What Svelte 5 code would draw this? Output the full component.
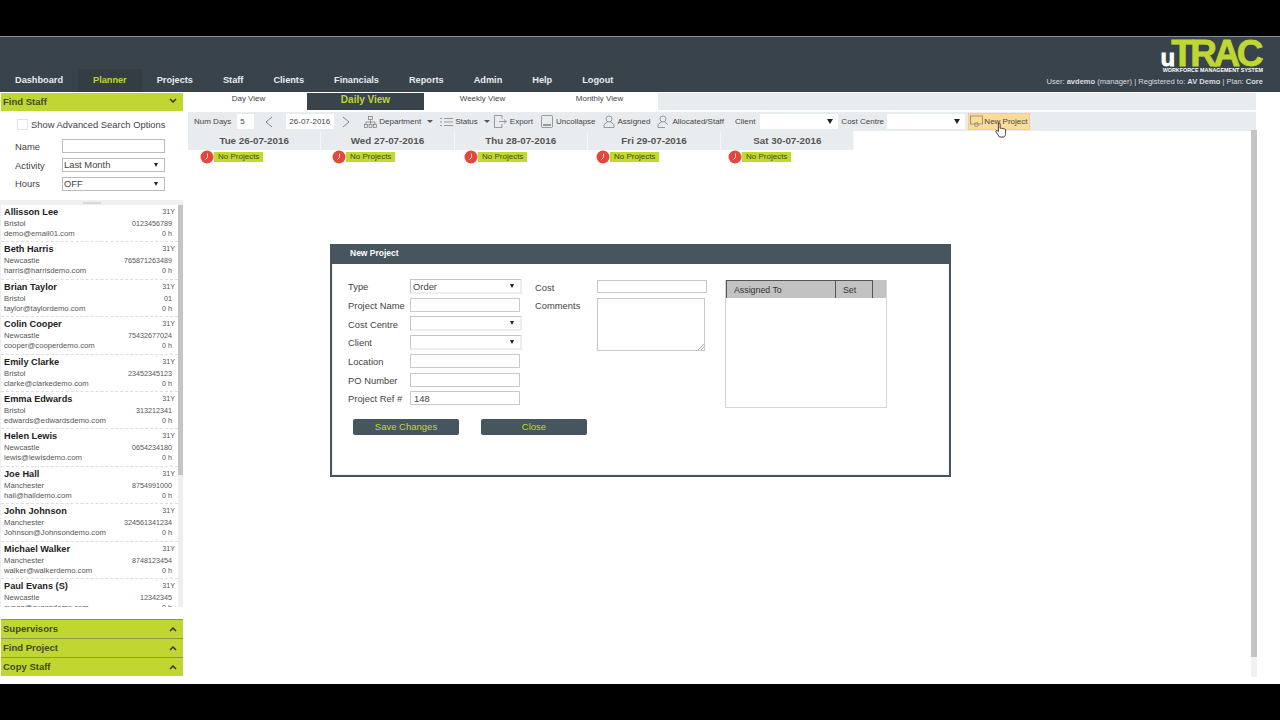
<script lang="ts">
  // Planner page with the New Project dialog open
  const navItems = ['Dashboard', 'Planner', 'Projects', 'Staff', 'Clients', 'Financials', 'Reports', 'Admin', 'Help', 'Logout']
  const tabs = ['Day View', 'Daily View', 'Weekly View', 'Monthly View']
  const days = ['Tue 26-07-2016', 'Wed 27-07-2016', 'Thu 28-07-2016', 'Fri 29-07-2016', 'Sat 30-07-2016']

  const staff = [
    { name: 'Allisson Lee', city: 'Bristol', email: 'demo@email01.com', phone: '0123456789' },
    { name: 'Beth Harris', city: 'Newcastle', email: 'harris@harrisdemo.com', phone: '765871263489' },
    { name: 'Brian Taylor', city: 'Bristol', email: 'taylor@taylordemo.com', phone: '01' },
    { name: 'Colin Cooper', city: 'Newcastle', email: 'cooper@cooperdemo.com', phone: '75432677024' },
    { name: 'Emily Clarke', city: 'Bristol', email: 'clarke@clarkedemo.com', phone: '23452345123' },
    { name: 'Emma Edwards', city: 'Bristol', email: 'edwards@edwardsdemo.com', phone: '313212341' },
    { name: 'Helen Lewis', city: 'Newcastle', email: 'lewis@lewisdemo.com', phone: '0654234180' },
    { name: 'Joe Hall', city: 'Manchester', email: 'hall@halldemo.com', phone: '8754991000' },
    { name: 'John Johnson', city: 'Manchester', email: 'Johnson@Johnsondemo.com', phone: '324561341234' },
    { name: 'Michael Walker', city: 'Manchester', email: 'walker@walkerdemo.com', phone: '8748123454' },
    { name: 'Paul Evans (S)', city: 'Newcastle', email: 'evans@evansdemo.com', phone: '12342345' }
  ]
</script>

<div class="page">
  <div class="letterbox top"></div>

  <header class="header">
    <nav class="nav">
      {#each navItems as item}
        <span class="nav-item" class:active={item === 'Planner'}>{item}</span>
      {/each}
    </nav>
    <div class="brand">
      <div class="logo"><span class="logo-u">u</span><span class="logo-trac">TRAC</span></div>
      <div class="logo-sub">WORKFORCE MANAGEMENT SYSTEM</div>
      <div class="user">User: <b>avdemo</b> (manager) | Registered to: <b>AV Demo</b> | Plan: <b>Core</b></div>
    </div>
  </header>

  <div class="body">
    <aside class="sidebar">
      <div class="bar first-bar">Find Staff
        <svg class="chev" width="8" height="6" viewBox="0 0 8 6"><polyline points="1,1 4,4 7,1" /></svg>
      </div>
      <div class="search">
        <label class="advanced"><span class="check"></span>Show Advanced Search Options</label>
        <div class="search-row"><span>Name</span><input class="field" /></div>
        <div class="search-row"><span>Activity</span><span class="select field">Last Month</span></div>
        <div class="search-row"><span>Hours</span><span class="select field">OFF</span></div>
      </div>
      <div class="splitter"><span></span></div>
      <div class="staff-wrap">
        <div class="staff-list">
          {#each staff as s}
            <div class="staff">
              <div class="staff-line"><b>{s.name}</b><span class="num-col">31Y</span></div>
              <div class="staff-line"><span>{s.city}</span><span class="num-col phone">{s.phone}</span></div>
              <div class="staff-line"><span>{s.email}</span><span class="num-col phone">0 h</span></div>
            </div>
          {/each}
        </div>
        <div class="staff-scroll"><div class="staff-thumb"></div></div>
      </div>
      <div class="accordion">
        {#each ['Supervisors', 'Find Project', 'Copy Staff'] as label}
          <div class="bar closed">{label}
            <svg class="chev" width="8" height="6" viewBox="0 0 8 6"><polyline points="1,5 4,2 7,5" /></svg>
          </div>
        {/each}
      </div>
    </aside>

    <main class="main">
      <div class="tabs">
        {#each tabs as tab}
          <span class="tab" class:current={tab === 'Daily View'}>{tab}</span>
        {/each}
        <span class="tabs-rest"></span>
      </div>

      <div class="toolbar">
        <span>Num Days</span>
        <span class="box num">5</span>
        <svg class="arrow prev" width="8" height="12" viewBox="0 0 8 12"><polyline points="7,1 1,6 7,11" /></svg>
        <span class="box date">26-07-2016</span>
        <svg class="arrow next" width="8" height="12" viewBox="0 0 8 12"><polyline points="1,1 7,6 1,11" /></svg>

        <span class="tool dept">
          <svg width="13" height="12" viewBox="0 0 13 12" class="ico"><rect x="4.500" y="0.500" width="4" height="3" /><rect x="0.500" y="8.500" width="3" height="3" /><rect x="5" y="8.500" width="3" height="3" /><rect x="9.500" y="8.500" width="3" height="3" /><path d="M6.500 3.500v5M2 8.500V6h9v2.500" /></svg>
          Department<i class="caret"></i>
        </span>
        <span class="tool status">
          <svg width="13" height="10" viewBox="0 0 13 10" class="ico"><path d="M0 1.500h2M4 1.500h9M0 5h2M4 5h9M0 8.500h2M4 8.500h9" /></svg>
          Status<i class="caret"></i>
        </span>
        <span class="tool">
          <svg width="13" height="13" viewBox="0 0 13 13" class="ico"><path d="M8 4V.5H.5v12H8V9M5 6.500h7M10 4.500l2.500 2-2.500 2" /></svg>
          Export
        </span>
        <span class="tool tight">
          <svg width="12" height="13" viewBox="0 0 12 13" class="ico"><rect x="0.500" y="0.500" width="11" height="12" rx="1" /><rect x="2" y="9" width="8" height="2" class="solid" /></svg>
          Uncollapse
        </span>
        <span class="tool tight">
          <svg width="12" height="13" viewBox="0 0 12 13" class="ico"><circle cx="6" cy="4" r="3" /><path d="M4.500 7 1 9.500V12.500H11V9.500L7.500 7" /></svg>
          Assigned
        </span>
        <span class="tool">
          <svg width="12" height="13" viewBox="0 0 12 13" class="ico"><circle cx="6" cy="4" r="3" /><path d="M4.500 7 1 9.500V12.500H8M7.500 7 11 9.500" /></svg>
          Allocated/Staff
        </span>
        <span class="client-label">Client</span>
        <span class="select box wide"></span>
        <span class="cost-label">Cost Centre</span>
        <span class="select box wide"></span>
        <span class="new-project">
          <svg width="13" height="12" viewBox="0 0 13 12" class="ico"><rect x="0.500" y="1" width="12" height="8" /><circle cx="6.500" cy="9.500" r="2" /></svg>
          New Project
        </span>
      </div>

      <div class="day-heads">
        {#each days as day}
          <div class="day-head">{day}</div>
        {/each}
      </div>
      <div class="day-cells">
        {#each days as day}
          <div class="day-cell">
            <svg class="clock" width="14" height="14" viewBox="0 0 14 14"><circle cx="7" cy="7" r="6.500" fill="#e5483a" /><path d="M7.500 3.500V7.500L5.500 9.500" fill="none" stroke="#fff" stroke-width="0.8" /></svg>
            <span class="none">No Projects</span>
          </div>
        {/each}
      </div>
      <div class="main-scroll"><div class="main-thumb"></div></div>
    </main>
  </div>

  <div class="letterbox bottom"></div>

  <!-- New Project dialog -->
  <div class="dialog">
    <div class="dialog-title">New Project</div>
    <div class="dialog-body">
      <div class="form">
        <div class="form-grid">
          <span>Type</span><span class="select input">Order</span>
          <span>Project Name</span><span class="input"></span>
          <span>Cost Centre</span><span class="select input"></span>
          <span>Client</span><span class="select input"></span>
          <span>Location</span><span class="input"></span>
          <span>PO Number</span><span class="input"></span>
          <span>Project Ref #</span><span class="input">148</span>
        </div>
        <div class="buttons">
          <button class="btn">Save Changes</button>
          <button class="btn">Close</button>
        </div>
      </div>
      <div class="form-side">
        <div class="side-row"><span>Cost</span><span class="input cost"></span></div>
        <div class="side-row"><span class="comments-label">Comments</span>
          <span class="input comments">
            <svg width="6" height="6" viewBox="0 0 6 6"><path d="M0 6 6 0M3 6 6 3" /></svg>
          </span>
        </div>
      </div>
      <div class="assigned">
        <div class="assigned-head"><span class="th first">Assigned To</span><span class="th second">Set</span></div>
      </div>
    </div>
  </div>

  <!-- mouse pointer -->
  <svg class="pointer" width="12" height="16" viewBox="0 0 12 16"><path d="M3.500 1.200c.8-.6 1.600 0 1.600.8v4.500c.6-.6 1.600-.5 1.900.2.500-.5 1.500-.4 1.800.4.600-.4 1.700-.1 1.800.9v3.500c0 1.700-.8 2.800-1.600 3.500H4.500L1 10c-.6-.9.400-2 1.400-1.200l1 .9V2z" fill="#fff" stroke="#111" stroke-width="0.8" /></svg>
</div>

<style>
  :global(body) {
    margin: 0;
    background: #000;
  }

  .page {
    position: relative;
    display: flex;
    flex-direction: column;
    width: 1280px;
    height: 720px;
    overflow: hidden;
    background: #fff;
    color: #444;
    font-family: "Liberation Sans", Arial, sans-serif;
    font-size: 9.4px;
  }

  .letterbox {
    background: #000;
    flex: none;
  }

  .letterbox.top {
    height: 36px;
    border-bottom: 1px solid #8a8d90;
  }

  .letterbox.bottom {
    height: 36px;
  }

  /* Header */
  .header {
    flex: none;
    display: flex;
    justify-content: space-between;
    height: 55px;
    background: #39434c;
  }

  .nav {
    display: flex;
    align-self: flex-end;
  }

  .nav-item {
    padding: 0 15px;
    height: 23px;
    line-height: 22px;
    color: #e8ecef;
    font-size: 9.2px;
    font-weight: 700;
  }

  .nav-item.active {
    background: #343c44;
    color: #bfd730;
  }

  .brand {
    display: flex;
    flex-direction: column;
    align-items: flex-end;
    padding: 3px 17px 0 0;
  }

  .logo {
    display: flex;
    align-items: baseline;
    height: 27px;
    line-height: 27px;
    font-weight: 700;
  }

  .logo-u {
    color: #fff;
    font-size: 24px;
    margin-right: -4px;
    -webkit-text-stroke: 0.8px #fff;
  }

  .logo-trac {
    color: #bfd730;
    font-size: 37px;
    letter-spacing: -3.5px;
    padding-right: 3px;
    -webkit-text-stroke: 0.8px #bfd730;
  }

  .logo-sub {
    color: #fff;
    font-size: 5.4px;
    font-weight: 700;
    line-height: 7px;
  }

  .user {
    color: #d9dee2;
    font-size: 7.55px;
    line-height: 10px;
    margin-top: 3px;
  }

  /* Page body */
  .body {
    flex: 1;
    display: flex;
    min-height: 0;
  }

  .sidebar {
    flex: none;
    display: flex;
    flex-direction: column;
    width: 183px;
    height: 583px;
    margin-right: 5px;
    background: #eef0f1;
  }

  .bar {
    display: flex;
    align-items: center;
    justify-content: space-between;
    flex: none;
    height: 18px;
    margin-left: 1px;
    padding: 0 6px 0 2px;
    background: #bfd730;
    color: #3f4a20;
    font-size: 9.5px;
    font-weight: 700;
  }

  .first-bar {
    height: 16px;
    padding-bottom: 2px;
    border-top: 1px solid #fff;
  }

  .chev {
    fill: none;
    stroke: #333;
    stroke-width: 1.5;
  }

  .search {
    display: flex;
    flex-direction: column;
    flex: none;
    box-sizing: border-box;
    height: 89px;
    padding: 3px 0 0 15px;
    background: #fff;
  }

  .advanced {
    display: flex;
    align-items: center;
    height: 20px;
    margin-bottom: 3px;
  }

  .check {
    width: 9px;
    height: 9px;
    margin: 0 3px 0 2px;
    background: #fff;
    border: 1px solid #e3e3e3;
  }

  .search-row {
    display: flex;
    align-items: center;
    height: 18.7px;
  }

  .search-row > span:first-child {
    width: 47px;
  }

  .field {
    box-sizing: border-box;
    width: 103px;
    height: 14px;
    padding: 0 1px;
    border: 1px solid #bbb;
    background: #fff;
    line-height: 12px;
  }

  .select {
    position: relative;
    display: block;
  }

  .select::after {
    content: '';
    position: absolute;
    right: 6px;
    top: 4px;
    border: 2.5px solid transparent;
    border-top: 4px solid #222;
    border-bottom: 0;
  }

  .splitter {
    flex: none;
    display: flex;
    justify-content: center;
    height: 5px;
    margin-left: 1px;
  }

  .splitter span {
    width: 18px;
    height: 2px;
    margin-top: 2px;
    background: #d8dadc;
  }

  .staff-wrap {
    flex: none;
    display: flex;
    height: 402px;
    margin-left: 1px;
    background: #fff;
    overflow: hidden;
  }

  .staff-list {
    flex: 1;
    min-width: 0;
  }

  .staff {
    box-sizing: border-box;
    height: 37.4px;
    padding: 1px 3px 0 3px;
    border-bottom: 1px dashed #ddd;
    font-size: 7.7px;
    color: #555;
  }

  .staff-line {
    display: flex;
    justify-content: space-between;
    height: 9px;
    line-height: 9px;
  }

  .staff-line:first-child {
    height: 12px;
    line-height: 12px;
  }

  .staff-line:nth-child(2) {
    height: 11px;
    line-height: 11px;
  }

  .staff-line b {
    font-size: 9.2px;
    color: #222;
  }

  .num-col {
    font-size: 7.2px;
  }

  .phone {
    padding-right: 3px;
  }

  .staff-scroll {
    flex: none;
    width: 5px;
    background: #efefef;
  }

  .staff-thumb {
    height: 270px;
    background: #c4c4c4;
  }

  .accordion {
    display: flex;
    flex-direction: column;
    padding-top: 12px;
    background: #fff;
  }

  .bar.closed {
    height: 17px;
    padding-bottom: 1px;
    border-top: 1px solid #8c9a3f;
  }

  /* Main area */
  .main {
    position: relative;
    flex: none;
    width: 1068px;
  }

  .tabs {
    display: flex;
    height: 17px;
    margin: 1px 0 2px 2px;
  }

  .tab {
    flex: none;
    width: 117px;
    text-align: center;
    font-size: 8px;
    line-height: 11px;
  }

  .tab.current {
    background: #39434c;
    color: #bfd730;
    font-size: 10px;
    font-weight: 700;
    line-height: 13px;
  }

  .tabs-rest {
    flex: 1;
    background: #e9ecee;
  }

  .toolbar {
    display: flex;
    align-items: center;
    height: 19px;
    padding-left: 6px;
    background: #e9ecee;
    font-size: 8px;
    white-space: nowrap;
  }

  .box {
    box-sizing: border-box;
    flex: none;
    height: 15px;
    background: #fff;
    line-height: 15px;
    padding: 0 3px;
  }

  .num {
    width: 17px;
    margin-left: 6px;
  }

  .date {
    width: 48px;
  }

  .arrow {
    flex: none;
    fill: none;
    stroke: #555;
    stroke-width: 0.7;
  }

  .prev {
    margin: 0 13px 0 11px;
  }

  .next {
    margin: 0 14px 0 8px;
  }

  .tool {
    display: flex;
    align-items: center;
    gap: 3px;
    margin-right: 8px;
  }

  .tool.tight {
    margin-right: 7px;
  }

  .dept {
    gap: 2px;
    margin-right: 7px;
  }

  .status {
    gap: 2px;
    margin-right: 4px;
  }

  .ico {
    flex: none;
    fill: none;
    stroke: #777;
    stroke-width: 0.7;
  }

  .ico .solid {
    fill: #999;
    stroke: none;
  }

  .caret {
    margin-left: 4px;
    border: 3px solid transparent;
    border-top: 3px solid #556;
    border-bottom: 0;
  }

  .client-label {
    margin: 0 5px 0 3px;
  }

  .cost-label {
    flex: none;
    width: 40px;
    margin-right: 6px;
  }

  .wide {
    width: 78px;
    margin-right: 3px;
  }

  .wide::after {
    right: 5px;
    top: 5px;
    border-width: 5px 3px 0;
  }

  .new-project {
    flex: none;
    display: flex;
    align-items: center;
    gap: 1px;
    height: 17px;
    width: 62px;
    padding-left: 1px;
    margin-top: -1px;
    box-sizing: border-box;
    background: #fbdc9a;
    border: 1px solid #f5cf80;
  }

  .day-heads,
  .day-cells {
    display: flex;
  }

  .day-head {
    flex: none;
    box-sizing: border-box;
    width: 133.3px;
    height: 19px;
    line-height: 19px;
    text-align: center;
    background: #e9ecee;
    border-right: 1px solid #f6f7f8;
    font-size: 9.8px;
    font-weight: 700;
    color: #555;
  }

  .day-cell {
    flex: none;
    display: flex;
    align-items: center;
    box-sizing: border-box;
    width: 132px;
    height: 14px;
    padding-left: 12px;
    font-size: 8px;
  }

  .none {
    height: 10px;
    line-height: 10px;
    padding: 0 4px;
    background: #c3d92e;
    color: #3e4a20;
  }

  .main-scroll {
    position: absolute;
    left: 1063px;
    top: 38px;
    width: 6px;
    height: 547px;
    background: #f1f1f1;
  }

  .main-thumb {
    height: 527px;
    background: #c4c4c4;
  }

  /* Dialog */
  .dialog {
    position: absolute;
    left: 330px;
    top: 244px;
    box-sizing: border-box;
    width: 621px;
    height: 233px;
    border: 2px solid #46555e;
    border-top: 0;
    background: #fff;
    box-shadow: inset 0 0 0 1px #f0f1f2;
  }

  .dialog-title {
    height: 20px;
    line-height: 19px;
    padding-left: 18px;
    background: #46555e;
    color: #fff;
    font-size: 8.5px;
    font-weight: 700;
  }

  .dialog-body {
    display: flex;
    padding: 13px 0 0 16px;
  }

  .form {
    flex: none;
    width: 172px;
  }

  .form-grid {
    display: grid;
    grid-template-columns: 62px 110px;
    grid-auto-rows: 18.7px;
    align-items: center;
  }

  .form-grid > span:nth-child(odd) {
    margin-top: 1px;
  }

  .input {
    display: block;
    box-sizing: border-box;
    height: 14px;
    border: 1px solid #c9c9c9;
    background: #fff;
    line-height: 13px;
    padding: 0 3px;
  }

  .form-grid .select {
    width: 112px;
    height: 15px;
    border-width: 1px 2px 2px 1px;
    border-color: #c4c4c4 #eee #eee #c4c4c4;
    padding-left: 2px;
  }

  .buttons {
    display: flex;
    gap: 22px;
    width: 240px;
    margin: 11px 0 0 5px;
  }

  .btn {
    flex: none;
    width: 106px;
    height: 16px;
    padding: 0;
    border: 0;
    border-radius: 2px;
    background: #46555e;
    color: #c3d92e;
    font-family: inherit;
    font-size: 9.5px;
  }

  .form-side {
    display: flex;
    flex-direction: column;
    flex: none;
    margin-left: 15px;
    padding-top: 3px;
  }

  .side-row {
    display: flex;
    align-items: flex-start;
    min-height: 18px;
  }

  .side-row > span:first-child {
    width: 62px;
    line-height: 13px;
    padding-top: 1px;
  }

  .side-row > .comments-label {
    padding-top: 2px;
  }

  .cost {
    width: 110px;
    height: 13px;
  }

  .comments {
    position: relative;
    width: 108px;
    height: 53px;
  }

  .comments svg {
    position: absolute;
    right: 0;
    bottom: 0;
    fill: none;
    stroke: #777;
    stroke-width: 0.6;
  }

  .assigned {
    flex: none;
    box-sizing: border-box;
    width: 162px;
    height: 128px;
    margin: 3px 0 0 18px;
    border: 1px solid #d4d4d4;
    border-top: 0;
  }

  .assigned-head {
    display: flex;
    height: 18px;
    background: #c2c2c2;
    color: #333;
    font-size: 8.8px;
    line-height: 18px;
  }

  .th {
    box-sizing: border-box;
    padding-left: 7px;
    border: 1px solid #555;
    border-bottom: 0;
  }

  .first {
    width: 110px;
  }

  .second {
    width: 37px;
    border-left: 0;
  }

  .pointer {
    position: absolute;
    left: 995px;
    top: 122px;
  }
</style>
